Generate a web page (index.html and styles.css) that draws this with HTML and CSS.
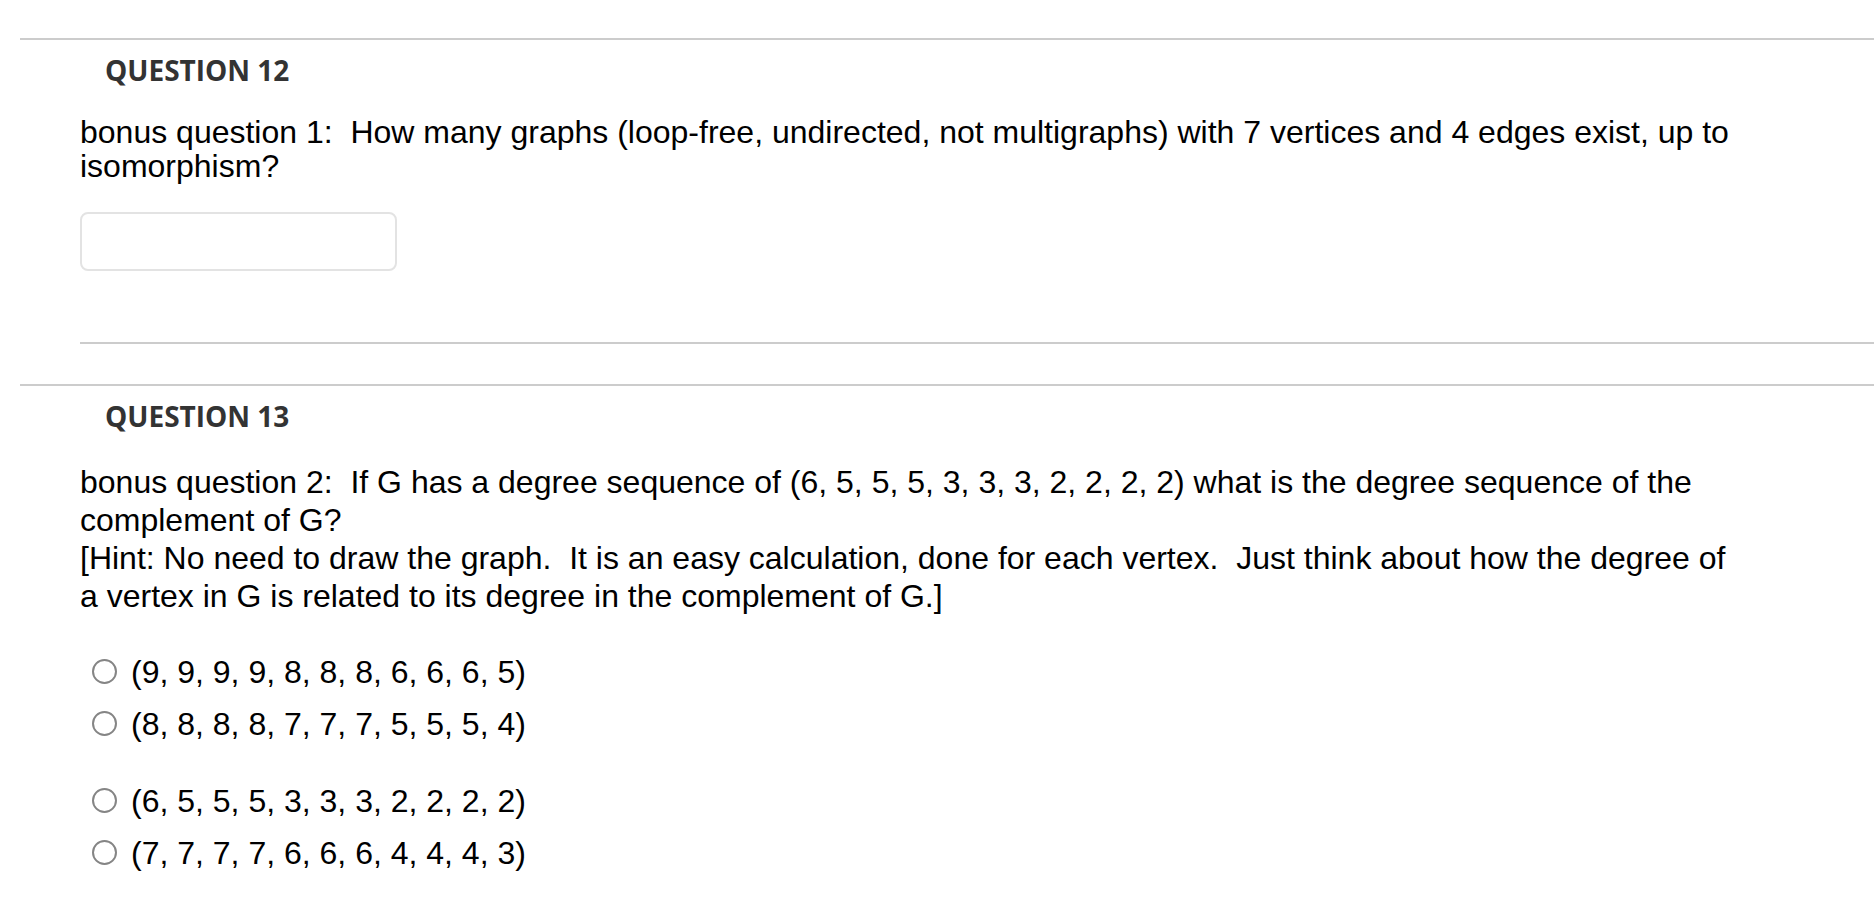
FILE: index.html
```html
<!DOCTYPE html>
<html lang="en">
<head>
<meta charset="utf-8">
<title>Questions</title>
<link rel="stylesheet" href="styles.css">
</head>
<body>
<section class="question">
  <h2 class="q-title">QUESTION 12</h2>
  <div class="q-body">
    <p class="q-text q12-text">bonus question 1:&nbsp; How many graphs (loop-free, undirected, not multigraphs) with 7 vertices and 4 edges exist, up to isomorphism?</p>
    <div class="answer-input"></div>
    <hr class="q-sep">
  </div>
</section>
<section class="question">
  <h2 class="q-title">QUESTION 13</h2>
  <div class="q-body">
    <p class="q-text q13-text">bonus question 2:&nbsp; If G has a degree sequence of (6, 5, 5, 5, 3, 3, 3, 2, 2, 2, 2) what is the degree sequence of the complement of G?<br>[Hint: No need to draw the graph.&nbsp; It is an easy calculation, done for each vertex.&nbsp; Just think about how the degree of a vertex in G is related to its degree in the complement of G.]</p>
    <ul class="options">
      <li class="option"><span class="radio"></span><span class="opt-label">(9, 9, 9, 9, 8, 8, 8, 6, 6, 6, 5)</span></li>
      <li class="option"><span class="radio"></span><span class="opt-label">(8, 8, 8, 8, 7, 7, 7, 5, 5, 5, 4)</span></li>
      <li class="option option-gap"><span class="radio"></span><span class="opt-label">(6, 5, 5, 5, 3, 3, 3, 2, 2, 2, 2)</span></li>
      <li class="option"><span class="radio"></span><span class="opt-label">(7, 7, 7, 7, 6, 6, 6, 4, 4, 4, 3)</span></li>
    </ul>
  </div>
</section>
</body>
</html>
```
FILE: styles.css
```css
html, body {
  margin: 0;
  padding: 0;
  background: #ffffff;
}

body {
  padding-top: 38px;
  font-family: "Liberation Sans", Arial, sans-serif;
  color: #000000;
}

.question {
  margin-left: 20px;
  border-top: 2px solid #cccccc;
}

.question + .question {
  margin-top: 40px;
}

.q-title {
  margin: 10px 0 0 85px;
  font-family: "Open Sans", "Noto Sans", sans-serif;
  font-weight: 700;
  font-size: 28px;
  line-height: 40px;
  color: #333333;
}

.q-body {
  padding-left: 60px;
}

.q-text {
  margin: 0;
  max-width: 1660px;
  font-size: 32px;
}

.q12-text {
  margin-top: 25px;
  line-height: 34px;
}

.q13-text {
  margin-top: 27px;
  line-height: 38px;
}

.answer-input {
  margin-top: 29px;
  width: 317px;
  height: 59px;
  box-sizing: border-box;
  border: 2px solid #e3e3e3;
  border-radius: 8px;
  background: #ffffff;
}

.q-sep {
  margin: 71px 0 0 0;
  border: 0;
  height: 2px;
  background: #cccccc;
}

.options {
  list-style: none;
  margin: 31px 0 0 0;
  padding: 0;
}

.option {
  display: flex;
  align-items: center;
  height: 52px;
  font-size: 32px;
  line-height: 52px;
}

.option-gap {
  margin-top: 25px;
}

.radio {
  flex: none;
  width: 25px;
  height: 25px;
  box-sizing: border-box;
  margin-left: 12px;
  margin-right: 14px;
  border: 2px solid #858585;
  border-radius: 50%;
  background: #ffffff;
  position: relative;
  top: -1px;
}

.opt-label {
  white-space: nowrap;
}
```
